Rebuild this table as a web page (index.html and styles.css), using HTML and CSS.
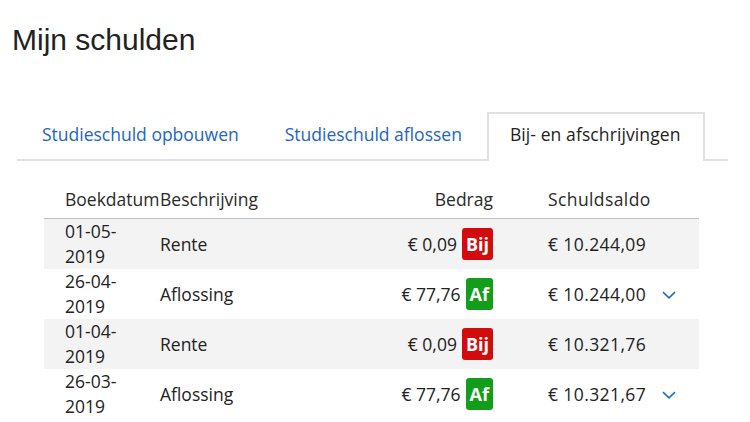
FILE: index.html
```html
<!DOCTYPE html>
<html lang="nl">
<head>
<meta charset="utf-8">
<title>Mijn schulden</title>
<link rel="stylesheet" href="styles.css">
</head>
<body>
<main class="page">
  <h1 class="title">Mijn schulden</h1>
  <nav class="tabs">
    <a class="tab" href="#">Studieschuld opbouwen</a>
    <a class="tab" href="#">Studieschuld aflossen</a>
    <span class="tab active">Bij- en afschrijvingen</span>
  </nav>
  <div class="table">
    <div class="row head">
      <div class="c-date">Boekdatum</div>
      <div class="c-desc">Beschrijving</div>
      <div class="c-amt">Bedrag</div>
      <div class="c-bal">Schuldsaldo</div>
    </div>
    <div class="row alt">
      <div class="c-date"><span class="date">01-05-2019</span></div>
      <div class="c-desc">Rente</div>
      <div class="c-amt">€ 0,09 <span class="badge bij">Bij</span></div>
      <div class="c-bal">€ 10.244,09</div>
    </div>
    <div class="row">
      <div class="c-date"><span class="date">26-04-2019</span></div>
      <div class="c-desc">Aflossing</div>
      <div class="c-amt">€ 77,76 <span class="badge af">Af</span></div>
      <div class="c-bal">€ 10.244,00 <svg class="chev" width="14" height="8" viewBox="0 0 14 8"><path d="M1 1.2 L7 6.8 L13 1.2" fill="none" stroke="#1f6fc5" stroke-width="1.6"/></svg></div>
    </div>
    <div class="row alt">
      <div class="c-date"><span class="date">01-04-2019</span></div>
      <div class="c-desc">Rente</div>
      <div class="c-amt">€ 0,09 <span class="badge bij">Bij</span></div>
      <div class="c-bal">€ 10.321,76</div>
    </div>
    <div class="row">
      <div class="c-date"><span class="date">26-03-2019</span></div>
      <div class="c-desc">Aflossing</div>
      <div class="c-amt">€ 77,76 <span class="badge af">Af</span></div>
      <div class="c-bal">€ 10.321,67 <svg class="chev" width="14" height="8" viewBox="0 0 14 8"><path d="M1 1.2 L7 6.8 L13 1.2" fill="none" stroke="#1f6fc5" stroke-width="1.6"/></svg></div>
    </div>
  </div>
</main>
</body>
</html>
```
FILE: styles.css
```css
html, body {
  margin: 0;
  background: #fff;
}
body {
  font-family: "Open Sans", "Noto Sans", sans-serif;
  font-size: 17.5px;
  color: #222;
}
.title {
  margin: 0;
  padding: 23px 0 0 12px;
  font-family: "Liberation Sans", Arial, sans-serif;
  font-weight: normal;
  font-size: 30px;
  line-height: 34px;
  color: #222;
}
.tabs {
  display: flex;
  align-items: flex-end;
  margin: 55px 22px 0 17px;
  padding-left: 2px;
  border-bottom: 2px solid #e0e0e0;
}
.tab {
  display: block;
  padding: 8px 21px 13px;
  line-height: 24px;
  border: 2px solid transparent;
  border-bottom: 0;
  color: #2264c8;
  text-decoration: none;
  white-space: nowrap;
}
.tab.active {
  color: #222;
  border-color: #e0e0e0;
  background: #fff;
  margin-left: 2px;
  margin-bottom: -2px;
  padding-right: 22px;
  padding-bottom: 15px;
  letter-spacing: 0.1px;
}
.table {
  margin: 0 51px 0 44px;
}
.row {
  display: grid;
  grid-template-columns: 116px 1fr 120px 206px;
  align-items: center;
  height: 50px;
  line-height: 25px;
}
.row.alt {
  background: #f3f3f3;
}
.row.head {
  align-items: end;
  padding-bottom: 6px;
  box-sizing: border-box;
  height: 58px;
  border-bottom: 1px solid #bdbdbd;
  color: #2a2a2a;
}
.c-date {
  padding-left: 21px;
}
.date {
  display: block;
  width: 62px;
}
.c-amt {
  display: flex;
  justify-content: flex-end;
  align-items: center;
  gap: 5px;
  white-space: nowrap;
}
.c-bal {
  padding-left: 55px;
  display: flex;
  align-items: center;
  white-space: nowrap;
  letter-spacing: 0.4px;
}
.badge {
  display: inline-block;
  height: 32px;
  line-height: 32px;
  padding: 0 4px;
  border-radius: 3px;
  color: #fff;
  font-weight: bold;
  font-size: 18px;
  letter-spacing: 0;
}
.bij {
  background: #d20c0c;
}
.af {
  background: #129e1b;
}
.chev {
  margin-left: 16px;
  margin-top: 2px;
}
```
